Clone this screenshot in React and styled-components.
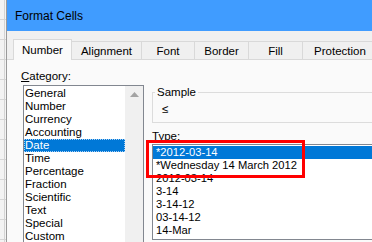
import React from "react";
import styled, { createGlobalStyle } from "styled-components";

const GlobalStyle = createGlobalStyle`
  html, body {
    margin: 0;
    padding: 0;
    width: 372px;
    height: 242px;
    overflow: hidden;
    background: #fff;
  }
  body {
    font-family: "Liberation Sans", Arial, sans-serif;
    font-size: 11.5px;
    color: #000;
  }
`;

const Screen = styled.div`
  display: flex;
  width: 372px;
  height: 242px;
  overflow: hidden;
`;

const SheetEdge = styled.div`
  flex: none;
  width: 6px;
  background:
    linear-gradient(to right, transparent 4px, #d4d4d4 4px 5px, transparent 5px),
    repeating-linear-gradient(to bottom, #f3f3f3 0 19px, #d6d6d6 19px 20px);
`;

const Dialog = styled.div`
  flex: 1;
  min-width: 0;
  display: flex;
  flex-direction: column;
  border-left: 1px solid #9a9a9a;
  background: #f0f0f0;
  overflow: hidden;
`;

const TitleBar = styled.div`
  flex: none;
  height: 31px;
  display: flex;
  align-items: center;
  padding-left: 8px;
  background: #409cff;
  font-size: 12px;
  color: #000;
`;

const TabStrip = styled.div`
  flex: none;
  box-sizing: border-box;
  height: 29px;
  display: flex;
  align-items: flex-end;
  padding-left: 6px;
  border-bottom: 1px solid #d9d9d9;
`;

const Tab = styled.div`
  flex: none;
  box-sizing: border-box;
  width: ${(p) => p.$w}px;
  height: ${(p) => (p.$active ? 21 : 18)}px;
  margin-right: -1px;
  margin-bottom: ${(p) => (p.$active ? -1 : 0)}px;
  display: flex;
  align-items: center;
  justify-content: center;
  padding-bottom: ${(p) => (p.$active ? 1 : 0)}px;
  border: 1px solid #d9d9d9;
  border-bottom: none;
  background: ${(p) => (p.$active ? "#fafafa" : "#f0f0f0")};
  position: relative;
  z-index: ${(p) => (p.$active ? 1 : 0)};
  white-space: nowrap;
`;

const Content = styled.div`
  flex: 1;
  display: flex;
  padding: 9px 0 0 14px;
  background: #fafafa;
  overflow: hidden;
`;

const LeftCol = styled.div`
  flex: none;
  width: 123px;
  display: flex;
  flex-direction: column;
`;

const Label = styled.div`
  height: 14px;
  line-height: 14px;
  white-space: nowrap;
  margin-top: ${(p) => p.$mt || 0}px;
`;

const AccessKey = styled.span`
  text-decoration: underline;
`;

const CategoryList = styled.div`
  box-sizing: border-box;
  width: 121px;
  height: 170px;
  margin: 2px 0 0 2px;
  display: flex;
  border: 1px solid #828790;
  background: #fff;
`;

const CategoryItems = styled.div`
  width: 101px;
  padding-top: 1px;
`;

const CategoryItem = styled.div`
  box-sizing: border-box;
  height: 13px;
  line-height: 13px;
  padding-left: 1px;
  white-space: nowrap;
  background: ${(p) => (p.$selected ? "#0078d7" : "transparent")};
  color: ${(p) => (p.$selected ? "#fff" : "#000")};
  outline: ${(p) => (p.$selected ? "1px dotted #a9d0f5" : "none")};
  outline-offset: -1px;
`;

const ScrollBar = styled.div`
  width: 18px;
  background: #f0f0f0;
  display: flex;
  flex-direction: column;
`;

const ScrollButton = styled.div`
  height: 17px;
  display: flex;
  align-items: center;
  justify-content: center;
`;

const RightCol = styled.div`
  flex: none;
  width: 260px;
  margin: 16px 0 0 8px;
  display: flex;
  flex-direction: column;
`;

const SampleBox = styled.fieldset`
  box-sizing: border-box;
  height: 38px;
  margin: 0;
  padding: 0 0 0 9px;
  min-width: 0;
  border: 1px solid #dcdcdc;
`;

const Legend = styled.legend`
  padding: 0 2px;
  margin-left: -7px;
  line-height: 14px;
  height: 14px;
`;

const SampleValue = styled.div`
  margin-top: 3px;
  line-height: 14px;
`;

const TypeWrap = styled.div`
  position: relative;
  margin-top: 1px;
`;

const TypeList = styled.div`
  border: 1px solid #828790;
  border-right: none;
  padding: 1px 0 2px;
  background: #fff;
`;

const TypeItem = styled.div`
  height: 13px;
  line-height: 13px;
  padding-left: 3px;
  font-size: 11.2px;
  white-space: nowrap;
  background: ${(p) => (p.$selected ? "#0078d7" : "transparent")};
  color: ${(p) => (p.$selected ? "#fff" : "#000")};
`;

const Highlight = styled.div`
  position: absolute;
  left: -6px;
  top: -4px;
  width: 159px;
  height: 38px;
  box-sizing: border-box;
  border: 3px solid #ff0000;
  pointer-events: none;
`;

const tabs = [
  { label: "Number", w: 59, active: true },
  { label: "Alignment", w: 71 },
  { label: "Font", w: 54 },
  { label: "Border", w: 55 },
  { label: "Fill", w: 55 },
  { label: "Protection", w: 76 },
];

const categories = [
  "General",
  "Number",
  "Currency",
  "Accounting",
  "Date",
  "Time",
  "Percentage",
  "Fraction",
  "Scientific",
  "Text",
  "Special",
  "Custom",
];

const types = [
  "*2012-03-14",
  "*Wednesday 14 March 2012",
  "2012-03-14",
  "3-14",
  "3-14-12",
  "03-14-12",
  "14-Mar",
];

export default function App() {
  return (
    <>
      <GlobalStyle />
      <Screen>
        <SheetEdge />
        <Dialog>
          <TitleBar>Format Cells</TitleBar>
          <TabStrip>
            {tabs.map((t) => (
              <Tab key={t.label} $w={t.w} $active={t.active}>
                {t.label}
              </Tab>
            ))}
          </TabStrip>
          <Content>
            <LeftCol>
              <Label>
                <AccessKey>C</AccessKey>ategory:
              </Label>
              <CategoryList>
                <CategoryItems>
                  {categories.map((c) => (
                    <CategoryItem key={c} $selected={c === "Date"}>
                      {c}
                    </CategoryItem>
                  ))}
                </CategoryItems>
                <ScrollBar>
                  <ScrollButton>
                    <svg width="9" height="5" viewBox="0 0 9 5">
                      <polygon points="0,5 4.5,0 9,5" fill="#a3a3a3" />
                    </svg>
                  </ScrollButton>
                </ScrollBar>
              </CategoryList>
            </LeftCol>
            <RightCol>
              <SampleBox>
                <Legend>Sample</Legend>
                <SampleValue>≤</SampleValue>
              </SampleBox>
              <Label $mt={6}>Type:</Label>
              <TypeWrap>
                <TypeList>
                  {types.map((t, i) => (
                    <TypeItem key={t} $selected={i === 0}>
                      {t}
                    </TypeItem>
                  ))}
                </TypeList>
                <Highlight />
              </TypeWrap>
            </RightCol>
          </Content>
        </Dialog>
      </Screen>
    </>
  );
}
